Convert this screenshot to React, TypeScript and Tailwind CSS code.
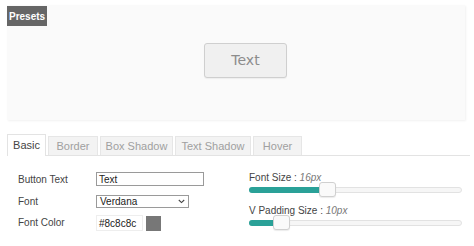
import React from "react";

const tabs = [
  { label: "Basic", w: "w-[39px]", active: true },
  { label: "Border", w: "w-[50px]" },
  { label: "Box Shadow", w: "w-[73px]" },
  { label: "Text Shadow", w: "w-[76px]" },
  { label: "Hover", w: "w-[49px]" },
];

function Slider({ label, value, fill }: { label: string; value: string; fill: number }) {
  return (
    <div className="flex flex-col">
      <div className="text-[10px] leading-[12px] text-[#444]">
        {label} : <span className="italic text-[#777]">{value}</span>
      </div>
      <div className="relative mt-[-1px] h-[14px] w-[213px]">
        <div className="absolute left-0 right-0 top-[4px] h-[6px] rounded-full border border-[#e2e2e2] bg-[#f6f6f6]" />
        <div
          className="absolute left-0 top-[4px] h-[6px] rounded-l-full bg-[#2aa198]"
          style={{ width: fill }}
        />
        <div
          className="absolute top-[-1px] h-[15px] w-[17px] rounded-[3px] border border-[#d0d0d0] bg-[#fafafa] shadow-[0_1px_1px_rgba(0,0,0,0.08)]"
          style={{ left: fill - 1 }}
        />
      </div>
    </div>
  );
}

export default function App() {
  return (
    <div
      className="h-[246px] w-[474px] overflow-hidden bg-white"
      style={{ fontFamily: '"Liberation Sans", Arial, sans-serif' }}
    >
      <div className="relative ml-[7px] mt-[5px] flex h-[115px] w-[458px] items-center justify-center bg-[#fafafa] pl-[19px] pb-[4px] shadow-[1px_1px_2px_rgba(0,0,0,0.06)]">
        <div className="absolute left-0 top-[1px] flex h-[20px] items-center bg-[#666666] px-[2px] text-[10px] font-bold text-white">
          Presets
        </div>
        <div
          className="flex h-[35px] w-[83px] items-center justify-center rounded-[3px] border border-[#cfcfcf] bg-[#f0f0f0] text-[14px] text-[#8c8c8c] shadow-[0_1px_1px_rgba(0,0,0,0.05)]"
          style={{ fontFamily: '"DejaVu Sans", Verdana, sans-serif' }}
        >
          Text
        </div>
      </div>

      <div className="ml-[7px] mt-[15px] flex h-[21px] w-[463px] items-end gap-[2px] border-b border-[#e3e3e3]">
        {tabs.map((t) =>
          t.active ? (
            <div
              key={t.label}
              className={`${t.w} mb-[-1px] flex h-[22px] items-center justify-center border border-b-0 border-[#e3e3e3] bg-white text-[11px] text-[#444]`}
            >
              {t.label}
            </div>
          ) : (
            <div
              key={t.label}
              className={`${t.w} flex h-[19px] items-center justify-center border border-b-0 border-[#e6e6e6] bg-[#f3f3f3] text-[11px] text-[#a0a0a0]`}
            >
              {t.label}
            </div>
          )
        )}
      </div>

      <div className="flex pt-[16px]">
        <div className="ml-[18px] flex w-[231px] flex-col">
          <div className="flex h-[14px] items-center">
            <div className="w-[78px] text-[10px] text-[#444]">Button Text</div>
            <div className="flex h-[14px] w-[108px] items-center border border-[#9a9a9a] bg-white px-[2px] text-[10px] text-[#222]">
              Text
            </div>
          </div>
          <div className="mt-[9px] flex h-[13px] items-center">
            <div className="w-[78px] text-[10px] text-[#444]">Font</div>
            <div className="flex h-[13px] w-[93px] items-center justify-between border border-[#9a9a9a] bg-white px-[3px] text-[10px] text-[#222]">
              <span>Verdana</span>
              <svg width="7" height="5" viewBox="0 0 7 5">
                <path d="M0.8 1 L3.5 3.6 L6.2 1" fill="none" stroke="#444" strokeWidth="1.1" />
              </svg>
            </div>
          </div>
          <div className="mt-[7px] flex h-[16px] items-center">
            <div className="w-[78px] self-start text-[10px] text-[#444]">Font Color</div>
            <div className="flex h-[16px] w-[47px] items-center border border-[#eeeeee] bg-white px-[2px] text-[10px] text-[#222]">
              #8c8c8c
            </div>
            <div className="ml-[3px] h-[15px] w-[15px] bg-[#777777]" />
          </div>
        </div>
        <div className="flex flex-col gap-[8px]">
          <Slider label="Font Size" value="16px" fill={71} />
          <Slider label="V Padding Size" value="10px" fill={25} />
        </div>
      </div>
    </div>
  );
}
